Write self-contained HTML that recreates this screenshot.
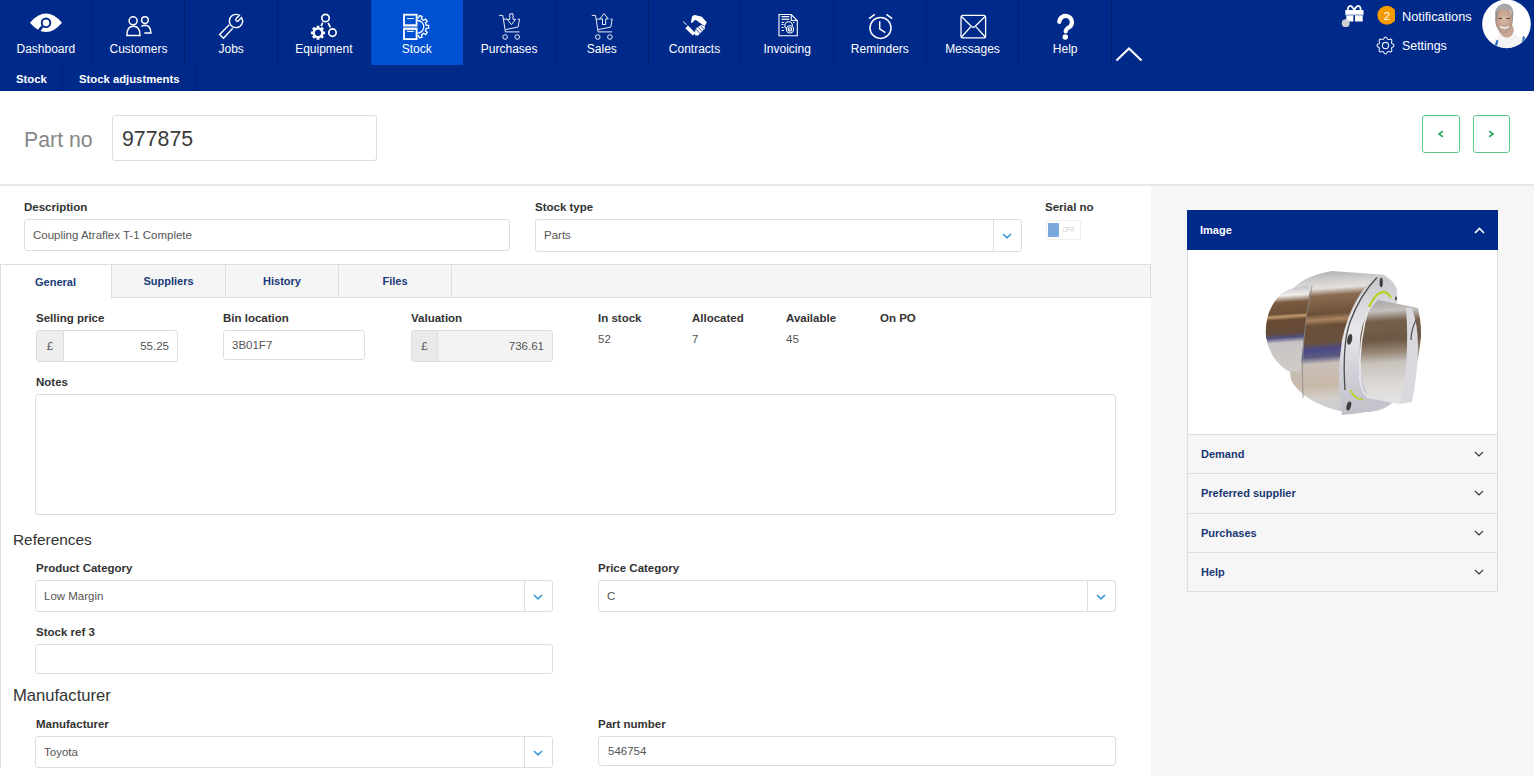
<!DOCTYPE html>
<html><head><meta charset="utf-8">
<style>
*{box-sizing:border-box;margin:0;padding:0}
html,body{width:1536px;height:776px;overflow:hidden;background:#fff;font-family:"Liberation Sans",sans-serif;color:#333}
.abs{position:absolute}
#nav{position:absolute;left:0;top:0;width:1534px;height:91px;background:#002a8a}
.ni{position:absolute;top:0;height:65px;width:92.67px;border-right:1px solid #001f72;color:#fff;text-align:center;font-size:12px}
.ni .lb{position:absolute;left:0;right:0;top:42px;line-height:14px}
.ni svg{position:absolute;left:50%;top:10px;transform:translateX(-50%)}
.ni.act{background:#0050d2;border-right:none}
.sn{position:absolute;top:65px;height:26px;color:#fff;font-weight:bold;font-size:11.3px;line-height:28px;border-right:1px solid #001f72}
.lbl{position:absolute;font-weight:bold;font-size:11.5px;color:#333;line-height:12px;white-space:nowrap}
.inp{position:absolute;border:1px solid #ddd;border-radius:3px;background:#fff;font-size:11.5px;color:#555}
.inp .t{position:absolute;left:8px;top:0;line-height:inherit}
.sel .dv{position:absolute;top:0;bottom:0;width:1px;background:#ddd}
.chev{position:absolute}
.val{position:absolute;font-size:11.5px;color:#555;line-height:12px}
.tab{position:absolute;top:264px;height:34px;width:113px;border-right:1px solid #ddd;text-align:center;font-weight:bold;font-size:11px;color:#1a3a78;line-height:34px}
.h2{position:absolute;font-size:16px;color:#333;line-height:18px}
.prow{position:absolute;left:1187px;width:311px;height:40px;border:1px solid #ddd;border-top:none;background:#f6f6f6;font-weight:bold;font-size:11px;color:#193873;line-height:39px;padding-left:13px}
.prow svg{position:absolute;right:13px;top:16px}
</style></head>
<body>
<div id="nav">
  <div class="ni" style="left:0"><div class="lb">Dashboard</div></div>
  <div class="ni" style="left:92.67px"><div class="lb">Customers</div></div>
  <div class="ni" style="left:185.33px"><div class="lb">Jobs</div></div>
  <div class="ni" style="left:278px"><div class="lb">Equipment</div></div>
  <div class="ni act" style="left:370.67px;width:92px"><div class="lb">Stock</div></div>
  <div class="ni" style="left:463.33px"><div class="lb">Purchases</div></div>
  <div class="ni" style="left:556px"><div class="lb">Sales</div></div>
  <div class="ni" style="left:648.67px"><div class="lb">Contracts</div></div>
  <div class="ni" style="left:741.33px"><div class="lb">Invoicing</div></div>
  <div class="ni" style="left:834px"><div class="lb">Reminders</div></div>
  <div class="ni" style="left:926.67px"><div class="lb">Messages</div></div>
  <div class="ni" style="left:1019.33px"><div class="lb">Help</div></div>
  <svg class="abs" style="left:1115px;top:46px" width="28" height="16" viewBox="0 0 28 16"><path d="M1.5 14.5 L14 2.5 L26.5 14.5" fill="none" stroke="#fff" stroke-width="2"/></svg>
  <div class="sn" style="left:0;width:63px;padding-left:16px">Stock</div>
  <div class="sn" style="left:63px;width:134px;padding-left:16px">Stock adjustments</div>
</div>

<!-- header -->
<div class="abs" style="left:24px;top:127.5px;font-size:21.3px;color:#888;line-height:25px">Part no</div>
<div class="inp" style="left:112px;top:115px;width:265px;height:46px;font-size:21.3px;color:#3a3a3a;line-height:47px"><span class="t" style="left:9px">977875</span></div>
<div class="abs" style="left:0;top:184px;width:1534px;height:2px;background:#e8e8e8"></div>

<!-- sidebar bg -->
<div class="abs" style="left:1151px;top:186px;width:383px;height:590px;background:#f6f6f6"></div>

<!-- top form -->
<div class="lbl" style="left:24px;top:201px">Description</div>
<div class="inp" style="left:24px;top:219px;width:486px;height:32px;line-height:30px"><span class="t">Coupling Atraflex T-1 Complete</span></div>
<div class="lbl" style="left:535px;top:201px">Stock type</div>
<div class="inp sel" style="left:535px;top:219px;width:487px;height:33px;line-height:31px"><span class="t">Parts</span><div class="dv" style="left:457px"></div></div>
<div class="lbl" style="left:1045px;top:201px">Serial no</div>

<!-- tabs -->
<div class="abs" style="left:0;top:264px;width:1151px;height:34px;background:#f5f5f5;border:1px solid #ddd;border-left:none"></div>
<div class="tab" style="left:0;width:112px;background:#fff;height:35px;border-top:1px solid #ddd">General</div>
<div class="tab" style="left:112px;width:114px">Suppliers</div>
<div class="tab" style="left:226px">History</div>
<div class="tab" style="left:339px">Files</div>
<div class="abs" style="left:0;top:264px;width:1px;height:504px;background:#ddd"></div>

<!-- nav icons overlay -->
<svg class="abs" style="left:0;top:0" width="1160" height="65" viewBox="0 0 1160 65">
 <path d="M30 22.7 Q46 4.5 62 22.7 Q46 41.5 30 22.7Z" fill="#fff"/>
 <circle cx="46" cy="22.8" r="4.3" fill="#fff" stroke="#002a8a" stroke-width="1.9"/>
 <path d="M42.3 26.5 L37.6 32.4" stroke="#002a8a" stroke-width="2.8"/>
 <g fill="none" stroke="#fff" stroke-width="1.5">
  <circle cx="133.1" cy="20.85" r="4.0"/>
  <path d="M126.9 35.4 C126.9 29.2 129.5 26.3 133.4 26.3 C137.3 26.3 140 29.2 140 35.4 Z"/>
  <circle cx="144.95" cy="20.1" r="3.3"/>
  <path d="M141.4 26.3 Q143 25.3 145.5 25.3 Q150.6 25.6 150.9 33.1 L144.3 33.1"/>
 </g>
 <g fill="none" stroke="#fff" stroke-width="1.4">
  <path d="M241.66 17.60 L238.40 20.86 A1.6 1.6 0 0 1 236.14 18.60 L239.40 15.34 A6.6 6.6 0 1 0 241.66 17.60Z"/>
  <path d="M229.3 24.7 L219.6 34.6 L223.5 38.3 L232.7 28.2"/>
 </g>
 <g fill="none" stroke="#fff" stroke-width="1.7">
  <circle cx="325.5" cy="18" r="3.7"/>
  <circle cx="332.5" cy="32.6" r="3.7"/>
  <path d="M322.6 22.6 L321.2 26.2 M328.2 22.9 L330.3 27.4"/>
 </g>
 <path d="M315.90 27.72 L316.64 27.47 L316.63 25.73 L319.37 25.73 L319.36 27.47 L320.10 27.72 L320.81 28.07 L322.03 26.83 L323.97 28.77 L322.73 29.99 L323.08 30.70 L323.33 31.44 L325.07 31.43 L325.07 34.17 L323.33 34.16 L323.08 34.90 L322.73 35.61 L323.97 36.83 L322.03 38.77 L320.81 37.53 L320.10 37.88 L319.36 38.13 L319.37 39.87 L316.63 39.87 L316.64 38.13 L315.90 37.88 L315.19 37.53 L313.97 38.77 L312.03 36.83 L313.27 35.61 L312.92 34.90 L312.67 34.16 L310.93 34.17 L310.93 31.43 L312.67 31.44 L312.92 30.70 L313.27 29.99 L312.03 28.77 L313.97 26.83 L315.19 28.07Z M318 29.6 A3.2 3.2 0 1 0 318.01 29.6Z" fill="#fff" fill-rule="evenodd"/>
 <g fill="none" stroke="#fff" stroke-width="1.8">
  <rect x="404" y="14.7" width="12.6" height="10.5"/>
  <rect x="404" y="29" width="12.6" height="10.1"/>
 </g>
 <rect x="403.1" y="26.1" width="14.4" height="1.9" fill="#fff" opacity="0.45"/>
 <path d="M407 18.6 H413.8 M407 31.4 H413.8" stroke="#fff" stroke-width="1"/>
 <g fill="none" stroke="#fff" stroke-width="1.3">
  <path d="M417.30 17.80 A9.0 9.0 0 0 1 418.58 17.89 L419.48 15.61 L422.12 16.47 L421.50 18.84 A9.0 9.0 0 0 1 423.57 20.35 L425.64 19.03 L427.27 21.27 L425.38 22.83 A9.0 9.0 0 0 1 426.17 25.27 L428.62 25.41 L428.62 28.19 L426.17 28.33 A9.0 9.0 0 0 1 425.38 30.77 L427.27 32.33 L425.64 34.57 L423.57 33.25 A9.0 9.0 0 0 1 421.50 34.76 L422.12 37.13 L419.48 37.99 L418.58 35.71 A9.0 9.0 0 0 1 417.30 35.80"/>
  <path d="M417.5 20.5 A6.3 6.3 0 0 1 417.5 33.1"/>
 </g>
 <g fill="none" stroke="#fff" stroke-width="1.0" opacity="0.92">
  <path d="M499.1 15.4 L502.8 15.4 L505.4 31.9 H519.5 M503.7 19.1 H507.5 M517.7 19.1 H519.5 L518.1 27 L505.6 29.6"/>
  <circle cx="505.1" cy="37" r="2.3"/>
  <circle cx="517.2" cy="37" r="2.3"/>
  <path d="M509.8 13.8 H513 V19.4 H515.6 L511.4 24.7 L507.2 19.4 H509.8 Z"/>
 </g>
 <g fill="none" stroke="#fff" stroke-width="1.0" opacity="0.92">
  <path d="M591.8 15.4 L595.5 15.4 L598.1 31.9 H612.2 M596.4 19.1 H600.2 M610.4 19.1 H612.2 L610.8 27 L598.3 29.6"/>
  <circle cx="597.8" cy="37" r="2.3"/>
  <circle cx="609.9" cy="37" r="2.3"/>
  <path d="M602.5 24.5 H605.7 V18.9 H608.3 L604.1 13.6 L599.9 18.9 H602.5 Z"/>
 </g>
 <g fill="#fff">
  <path d="M690.9 22.9 L691.9 17 Q692.6 15 695 15 L701.8 16.8 L706.8 22.2 L704.6 26.2 L696.3 20.2 Q695 19.5 694.2 20.6 L693 22.3 Z"/>
  <path d="M685.3 28.2 L687.9 25.5 L695.5 33 L692.8 35.6 Z"/>
  <path d="M696 28.5 L701 25 L704.6 26.2 L705 28.6 L698 35.5 L695.6 35.6 L694.3 33.8 Z"/>
 </g>
 <path d="M683.2 21.6 L686.7 24.8" stroke="#fff" stroke-width="1"/>
 <path d="M696 29.4 L700.3 33.5 M698.2 27.6 L702.4 31.5 M700.5 26 L704.2 29.5" stroke="#002a8a" stroke-width="0.8"/>
 <g fill="none" stroke="#fff" stroke-width="1.1">
  <path d="M779 14.5 H791.3 L797.3 20.7 V35.8 H779 Z"/>
  <path d="M791.3 14.5 V20.5 H797.3"/>
  <path d="M781.5 16.6 H789.3 M781.5 22.5 H784 M781.5 24.5 H783.5 M781.5 27.5 H783.5 M781.5 30.5 H784 M793 22.5 H794.5"/>
  <circle cx="788.6" cy="25.5" r="3.8"/>
 </g>
 <rect x="781.5" y="18.5" width="7.8" height="1.6" fill="#fff" opacity="0.8"/>
 <circle cx="790" cy="29.4" r="4.3" fill="#002a8a"/>
 <circle cx="790" cy="29.4" r="3.6" fill="none" stroke="#fff" stroke-width="1.1"/>
 <circle cx="790" cy="29.4" r="2.3" fill="#fff"/>
 <path d="M789.4 28.4 L790.2 27.9 V31" stroke="#002a8a" stroke-width="0.9" fill="none"/>
 <g fill="none" stroke="#fff" stroke-width="1.5">
  <circle cx="880.5" cy="27.9" r="10.5"/>
  <path d="M879.7 21.2 V28.9 L885.3 32.6"/>
  <path d="M869 18.7 L874.8 14.3 M892.2 18.7 L886.4 14.3"/>
 </g>
 <g fill="none" stroke="#fff" stroke-width="1.3">
  <rect x="961" y="15.3" width="24.6" height="22.6" rx="2"/>
  <path d="M961.5 16.5 L971.5 26.5 Q973.3 28 975 26.5 L985 16.5 M961.8 36.8 L970.6 26.9 M985 36.8 L976.1 26.9"/>
 </g>
 <path d="M1059.3 21.8 A6.3 6.3 0 1 1 1070.2 26.5 Q1065.7 29 1065.7 31.4" fill="none" stroke="#fff" stroke-width="4.2" stroke-linecap="round"/>
 <circle cx="1065.3" cy="37" r="2.7" fill="#fff"/>
</svg>
<!-- notifications -->
<svg class="abs" style="left:1335px;top:0" width="60" height="60" viewBox="1335 0 60 60">
 <g fill="#fff">
  <rect x="1345.3" y="10" width="18.2" height="4.7"/>
  <rect x="1346.3" y="15.3" width="7.1" height="6.2"/>
  <rect x="1355" y="15.3" width="7.7" height="6.2"/>
 </g>
 <rect x="1345.3" y="14.3" width="18.2" height="1" fill="#c0c8e8"/>
 <path d="M1354.2 10 Q1352 5.5 1349.8 6 Q1347.5 6.8 1348 10 M1354.2 10 Q1356.5 5.5 1358.8 6 Q1361 6.8 1360.5 10" fill="none" stroke="#fff" stroke-width="1.7"/>
 <circle cx="1345.7" cy="23.2" r="3.9" fill="#d0d0d0"/>
 <circle cx="1386.9" cy="15.2" r="9.5" fill="#f59b00"/>
 <g fill="none" stroke="#e8ecf6" stroke-width="1.1">
  <circle cx="1385.5" cy="45.5" r="3.1"/>
  <path d="M1385.50 37.05 L1386.04 37.20 L1386.54 37.59 L1386.96 38.14 L1387.32 38.71 L1387.65 39.18 L1388.01 39.45 L1388.45 39.51 L1389.01 39.42 L1389.67 39.26 L1390.35 39.17 L1390.99 39.24 L1391.48 39.52 L1391.76 40.01 L1391.83 40.65 L1391.74 41.33 L1391.58 41.99 L1391.49 42.55 L1391.55 42.99 L1391.82 43.35 L1392.29 43.68 L1392.86 44.04 L1393.41 44.46 L1393.80 44.96 L1393.95 45.50 L1393.80 46.04 L1393.41 46.54 L1392.86 46.96 L1392.29 47.32 L1391.82 47.65 L1391.55 48.01 L1391.49 48.45 L1391.58 49.01 L1391.74 49.67 L1391.83 50.35 L1391.76 50.99 L1391.48 51.48 L1390.99 51.76 L1390.35 51.83 L1389.67 51.74 L1389.01 51.58 L1388.45 51.49 L1388.01 51.55 L1387.65 51.82 L1387.32 52.29 L1386.96 52.86 L1386.54 53.41 L1386.04 53.80 L1385.50 53.95 L1384.96 53.80 L1384.46 53.41 L1384.04 52.86 L1383.68 52.29 L1383.35 51.82 L1382.99 51.55 L1382.55 51.49 L1381.99 51.58 L1381.33 51.74 L1380.65 51.83 L1380.01 51.76 L1379.52 51.48 L1379.24 50.99 L1379.17 50.35 L1379.26 49.67 L1379.42 49.01 L1379.51 48.45 L1379.45 48.01 L1379.18 47.65 L1378.71 47.32 L1378.14 46.96 L1377.59 46.54 L1377.20 46.04 L1377.05 45.50 L1377.20 44.96 L1377.59 44.46 L1378.14 44.04 L1378.71 43.68 L1379.18 43.35 L1379.45 42.99 L1379.51 42.55 L1379.42 41.99 L1379.26 41.33 L1379.17 40.65 L1379.24 40.01 L1379.52 39.52 L1380.01 39.24 L1380.65 39.17 L1381.33 39.26 L1381.99 39.42 L1382.55 39.51 L1382.99 39.45 L1383.35 39.18 L1383.68 38.71 L1384.04 38.14 L1384.46 37.59 L1384.96 37.20 L1385.50 37.05Z"/>
 </g>
</svg>
<div class="abs" style="left:1381px;top:8.5px;width:12px;text-align:center;color:#fff;font-size:11.5px;line-height:14px">2</div>
<div class="abs" style="left:1402px;top:8.5px;color:#fff;font-size:12.8px;line-height:15px">Notifications</div>
<div class="abs" style="left:1402px;top:39px;color:#fff;font-size:12.4px;line-height:15px">Settings</div>

<!-- avatar -->
<svg class="abs" style="left:1482px;top:0" width="50" height="50" viewBox="0 0 50 50">
 <defs><clipPath id="av"><circle cx="24.5" cy="23.9" r="24"/></clipPath>
 <radialGradient id="face" cx="0.5" cy="0.45" r="0.6"><stop offset="0" stop-color="#d8bca8"/><stop offset="0.7" stop-color="#bf9c88"/><stop offset="1" stop-color="#9c7c6c"/></radialGradient></defs>
 <circle cx="24.5" cy="23.9" r="24.3" fill="#fff"/>
 <g clip-path="url(#av)">
  <path d="M8 52 Q10 38 20.5 34 L26 37 L30.5 33.5 Q42 36 44 52Z" fill="#f4f4f4"/>
  <path d="M11 50 L14.5 40 L16.5 40.5 L14 50Z M38.5 50 L41 36 L43 37 L41.5 50Z" fill="#2d6cb8"/>
  <path d="M17 32 Q21 38 25.5 37.5 Q30 37 32 31 L31 26 L18 26Z" fill="#c8a894"/>
  <ellipse cx="22" cy="20.5" rx="8.8" ry="12.5" fill="url(#face)"/>
  <path d="M13 17 Q12 5 22.5 3.5 Q32 4 31.5 16 Q30 9.5 22.5 9 Q15 9.5 13 17Z" fill="#a9a9a9"/>
  <path d="M13.5 19 Q13 12 16 10 L14.5 22Z M31 18 Q31.5 12 29 10 L30.5 22Z" fill="#8e8e8e"/>
  <path d="M15.5 25 Q22 33.5 29.5 25 Q29 31 22 33 Q15.5 31 15.5 25Z" fill="#b8a89c" opacity="0.8"/>
  <path d="M18 26.5 Q22.5 29.5 27 26.5" fill="none" stroke="#fff" stroke-width="1.3"/>
  <path d="M16.5 18.5 H20 M24.5 18.5 H28" stroke="#5a4038" stroke-width="1.1"/>
 </g>
</svg>

<!-- prev/next -->
<div class="abs" style="left:1422px;top:115px;width:38px;height:38px;border:1.5px solid #5ccb8a;border-radius:3px"></div>
<div class="abs" style="left:1473px;top:115px;width:37px;height:38px;border:1.5px solid #5ccb8a;border-radius:3px"></div>
<svg class="abs" style="left:1437px;top:130px" width="8" height="8" viewBox="0 0 8 8"><path d="M5.8 1.2 L2 4 L5.8 6.8" fill="none" stroke="#27a85a" stroke-width="1.6"/></svg>
<svg class="abs" style="left:1487px;top:130px" width="8" height="8" viewBox="0 0 8 8"><path d="M2.2 1.2 L6 4 L2.2 6.8" fill="none" stroke="#27a85a" stroke-width="1.6"/></svg>

<!-- chevron stock type & toggle -->
<svg class="abs" style="left:1002px;top:233px" width="10" height="6" viewBox="0 0 10 6"><path d="M1 1 L5 4.8 L9 1" fill="none" stroke="#3b9ad9" stroke-width="1.7"/></svg>
<div class="abs" style="left:1046px;top:220px;width:35px;height:20px;border:1px solid #eee;border-radius:2px;background:#fff"></div>
<div class="abs" style="left:1048px;top:223px;width:11px;height:14px;background:#7aa8dc;border-radius:1px"></div>
<div class="abs" style="left:1062px;top:226px;font-size:6.5px;color:#cfcfcf;line-height:8px">OFF</div>

<!-- general tab content -->
<div class="lbl" style="left:36px;top:312px">Selling price</div>
<div class="inp" style="left:36px;top:330px;width:142px;height:32px;line-height:30px;text-align:right"><div class="abs" style="left:0;top:0;width:27px;height:30px;background:#eee;border-right:1px solid #ddd;text-align:center;color:#555">£</div><span style="position:absolute;right:8px">55.25</span></div>
<div class="lbl" style="left:223px;top:312px">Bin location</div>
<div class="inp" style="left:223px;top:330px;width:142px;height:30px;line-height:28px"><span class="t" style="left:8px">3B01F7</span></div>
<div class="lbl" style="left:411px;top:312px">Valuation</div>
<div class="inp" style="left:411px;top:330px;width:142px;height:32px;line-height:30px;background:#f3f3f3"><div class="abs" style="left:0;top:0;width:26px;height:30px;background:#e9e9e9;border-right:1px solid #ddd;text-align:center;color:#555">£</div><span style="position:absolute;right:8px">736.61</span></div>
<div class="lbl" style="left:598px;top:312px">In stock</div>
<div class="lbl" style="left:692px;top:312px">Allocated</div>
<div class="lbl" style="left:786px;top:312px">Available</div>
<div class="lbl" style="left:880px;top:312px">On PO</div>
<div class="val" style="left:598px;top:333px">52</div>
<div class="val" style="left:692px;top:333px">7</div>
<div class="val" style="left:786px;top:333px">45</div>

<div class="lbl" style="left:36px;top:376px">Notes</div>
<div class="inp" style="left:35px;top:394px;width:1081px;height:121px"></div>

<div class="h2" style="left:13px;top:531px;font-size:15.4px">References</div>
<div class="lbl" style="left:36px;top:562px">Product Category</div>
<div class="inp sel" style="left:35px;top:580px;width:518px;height:32px;line-height:30px"><span class="t">Low Margin</span><div class="dv" style="left:488px"></div></div>
<svg class="abs" style="left:533px;top:594px" width="10" height="6" viewBox="0 0 10 6"><path d="M1 1 L5 4.8 L9 1" fill="none" stroke="#3b9ad9" stroke-width="1.7"/></svg>
<div class="lbl" style="left:598px;top:562px">Price Category</div>
<div class="inp sel" style="left:598px;top:580px;width:518px;height:32px;line-height:30px"><span class="t">C</span><div class="dv" style="left:488px"></div></div>
<svg class="abs" style="left:1096px;top:594px" width="10" height="6" viewBox="0 0 10 6"><path d="M1 1 L5 4.8 L9 1" fill="none" stroke="#3b9ad9" stroke-width="1.7"/></svg>
<div class="lbl" style="left:36px;top:626px">Stock ref 3</div>
<div class="inp" style="left:35px;top:644px;width:518px;height:30px"></div>

<div class="h2" style="left:13px;top:687px;font-size:16.6px">Manufacturer</div>
<div class="lbl" style="left:36px;top:718px">Manufacturer</div>
<div class="inp sel" style="left:35px;top:736px;width:518px;height:32px;line-height:30px"><span class="t">Toyota</span><div class="dv" style="left:488px"></div></div>
<svg class="abs" style="left:533px;top:750px" width="10" height="6" viewBox="0 0 10 6"><path d="M1 1 L5 4.8 L9 1" fill="none" stroke="#3b9ad9" stroke-width="1.7"/></svg>
<div class="lbl" style="left:598px;top:718px">Part number</div>
<div class="inp" style="left:598px;top:736px;width:518px;height:30px;line-height:28px"><span class="t" style="left:9px">546754</span></div>

<!-- sidebar panel -->
<div class="abs" style="left:1187px;top:210px;width:311px;height:40px;background:#002a8a;color:#fff;font-weight:bold;font-size:11px;line-height:40px;padding-left:13px">Image</div>
<svg class="abs" style="left:1474px;top:227px" width="11" height="7" viewBox="0 0 11 7"><path d="M1 6 L5.5 1.5 L10 6" fill="none" stroke="#fff" stroke-width="1.6"/></svg>
<div class="abs" style="left:1187px;top:250px;width:311px;height:185px;background:#fff;border:1px solid #ddd;border-top:none"></div>

<!-- coupling image -->
<svg class="abs" style="left:1255px;top:262px" width="175" height="160" viewBox="1255 262 175 160">
 <defs>
  <linearGradient id="gBody" x1="1330" y1="271" x2="1340" y2="412" gradientUnits="userSpaceOnUse">
   <stop offset="0" stop-color="#b4b4b8"/>
   <stop offset="0.07" stop-color="#d2d0ce"/>
   <stop offset="0.12" stop-color="#e4e0dc"/>
   <stop offset="0.17" stop-color="#8a6c52"/>
   <stop offset="0.3" stop-color="#6c5038"/>
   <stop offset="0.34" stop-color="#a88560"/>
   <stop offset="0.38" stop-color="#6a4e38"/>
   <stop offset="0.5" stop-color="#6a5240"/>
   <stop offset="0.55" stop-color="#4a4a88"/>
   <stop offset="0.6" stop-color="#5a5a80"/>
   <stop offset="0.65" stop-color="#c8c0b8"/>
   <stop offset="0.8" stop-color="#c8b8a8"/>
   <stop offset="0.9" stop-color="#d4d0cc"/>
   <stop offset="1" stop-color="#c8c8d0"/>
  </linearGradient>
  <linearGradient id="gHub" x1="1285" y1="285" x2="1291" y2="372" gradientUnits="userSpaceOnUse">
   <stop offset="0" stop-color="#b8b8c0"/>
   <stop offset="0.12" stop-color="#f2eeea"/>
   <stop offset="0.2" stop-color="#7a5a40"/>
   <stop offset="0.33" stop-color="#6e5038"/>
   <stop offset="0.36" stop-color="#c09a6a"/>
   <stop offset="0.40" stop-color="#6a4c34"/>
   <stop offset="0.55" stop-color="#624a3a"/>
   <stop offset="0.6" stop-color="#505080"/>
   <stop offset="0.66" stop-color="#c8c4c4"/>
   <stop offset="1" stop-color="#d0ccc8"/>
  </linearGradient>
  <linearGradient id="gShaft" x1="1390" y1="300" x2="1396" y2="404" gradientUnits="userSpaceOnUse">
   <stop offset="0" stop-color="#a8a8ac"/>
   <stop offset="0.1" stop-color="#c4c0bc"/>
   <stop offset="0.2" stop-color="#75604c"/>
   <stop offset="0.38" stop-color="#6c5844"/>
   <stop offset="0.5" stop-color="#9a8a7a"/>
   <stop offset="0.6" stop-color="#c8c2bc"/>
   <stop offset="0.8" stop-color="#dcd8d4"/>
   <stop offset="1" stop-color="#e4e4e8"/>
  </linearGradient>
  <linearGradient id="gFl" x1="1370" y1="275" x2="1370" y2="415" gradientUnits="userSpaceOnUse">
   <stop offset="0" stop-color="#c8c8cc"/>
   <stop offset="0.4" stop-color="#e8e8ec"/>
   <stop offset="0.7" stop-color="#d0d0d8"/>
   <stop offset="1" stop-color="#c0c0c8"/>
  </linearGradient>
 </defs>
 <path d="M1290 292 Q1302 276 1332 271 L1384 274.8 Q1397 284 1397 300 L1398 395 Q1390 410 1370 412 L1340 411 Q1303 402 1291 380 Q1284 335 1290 292 Z" fill="url(#gBody)"/>
 <path d="M1282 293 Q1295 286 1310 285.6 L1300 372 Q1295 372 1288 371 Q1270 360 1266 337 Q1264 310 1282 293 Z" fill="url(#gHub)"/>
 <path d="M1312 286 Q1300 340 1303 398" fill="none" stroke="#8a8a8a" stroke-width="0.8"/>
 <path d="M1377 276 Q1393 276 1397 290 L1398 398 Q1385 412 1342 415 Q1336 380 1342 340 Q1352 295 1377 276 Z" fill="url(#gFl)"/>
 <path d="M1377 277.5 Q1360 295 1350 322 Q1342 345 1345 390" fill="none" stroke="#4a4a4a" stroke-width="1.3"/>
 <path d="M1378 300 L1418 308 Q1423 330 1420 345 Q1416 380 1404 402 L1397.7 404 L1368 397.7 Q1358 370 1360 340 Q1362 315 1378 300 Z" fill="url(#gShaft)"/>
 <path d="M1370 303 Q1358 340 1360 380 Q1362 394 1369 398" fill="none" stroke="#e8e8ec" stroke-width="1.5"/>
 <path d="M1412 308 Q1424 340 1412 402 L1400 404 Q1410 360 1406 308 Z" fill="#d8d8de"/>
 <path d="M1416 320 Q1411 330 1411 340" fill="none" stroke="#505050" stroke-width="1.2"/>
 <ellipse cx="1381.2" cy="282.5" rx="1.6" ry="4.8" fill="#3c3c3c"/>
 <ellipse cx="1349.7" cy="339.4" rx="2.4" ry="5.5" fill="#3c3c3c" transform="rotate(12 1349.7 339.4)"/>
 <ellipse cx="1348.8" cy="406" rx="2.2" ry="4.6" fill="#3c3c3c" transform="rotate(15 1348.8 406)"/>
 <ellipse cx="1396" cy="298.5" rx="1" ry="2" fill="#444"/>
 <path d="M1368.9 307 Q1376 292 1383.3 291.8 Q1388 292 1391 298" fill="none" stroke="#b8d028" stroke-width="2.2"/>
 <path d="M1350.5 390 Q1354 399 1362.7 399.5" fill="none" stroke="#b8d028" stroke-width="2"/>
</svg>
<div class="abs" style="left:1187px;top:434px;width:311px;height:1px;background:#ddd"></div>
<div class="prow" style="top:435px;height:39px;line-height:38px">Demand<svg width="10" height="6" viewBox="0 0 10 6"><path d="M1 1 L5 5 L9 1" fill="none" stroke="#333" stroke-width="1.1"/></svg></div>
<div class="prow" style="top:474px;height:40px;line-height:39px">Preferred supplier<svg width="10" height="6" viewBox="0 0 10 6"><path d="M1 1 L5 5 L9 1" fill="none" stroke="#333" stroke-width="1.1"/></svg></div>
<div class="prow" style="top:514px;height:39px;line-height:38px">Purchases<svg width="10" height="6" viewBox="0 0 10 6"><path d="M1 1 L5 5 L9 1" fill="none" stroke="#333" stroke-width="1.1"/></svg></div>
<div class="prow" style="top:553px;height:39px;line-height:38px">Help<svg width="10" height="6" viewBox="0 0 10 6"><path d="M1 1 L5 5 L9 1" fill="none" stroke="#333" stroke-width="1.1"/></svg></div>

</body></html>
